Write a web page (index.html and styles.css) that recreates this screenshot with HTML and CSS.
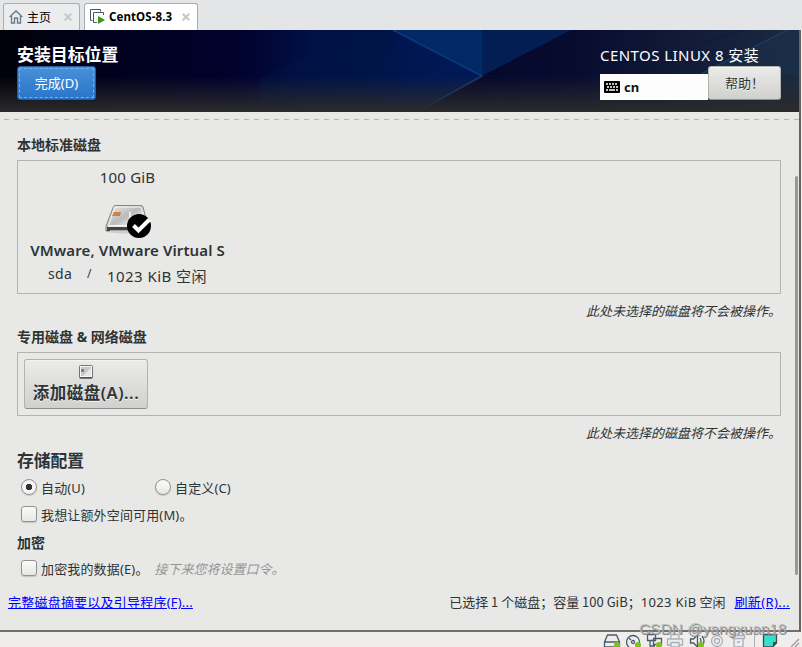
FILE: index.html
```
<!DOCTYPE html>
<html lang="zh-CN">
<head>
  <meta charset="UTF-8" />
  <title>安装目标位置</title>
  <link rel="stylesheet" href="styles.css">
</head>
<body>

<div class="tabs">
  <div class="tab">
    <svg width="14" height="14" viewBox="0 0 14 14" fill="none" stroke="#657987" stroke-width="1.3"><path d="M.7 7 7 1l6.300 6M2.500 6v7h3V8h3v5h3V6"/></svg>
    <span class="tab-name">主页</span>
    <svg class="close" width="8" height="8" viewBox="0 0 8 8"><path d="m.7.7 6.600 6.600m0-6.600L.7 7.300"/></svg>
  </div>
  <div class="tab active">
    <svg width="15" height="15" viewBox="0 0 15 15" fill="none" stroke="#455a66"><path d="M2.500 11.500h-2V.5h10v2M7 13.500H3.500v-10h10V6"/><path d="m8 7 7 4-7 4z" fill="#3c9b0c" stroke="none"/></svg>
    <span class="tab-name">CentOS-8.3</span>
    <svg class="close" width="8" height="8" viewBox="0 0 8 8"><path d="m.7.7 6.600 6.600m0-6.600L.7 7.300"/></svg>
  </div>
</div>

<div class="screen">
  <header class="banner">
    <svg class="banner-art" width="799" height="82" viewBox="0 0 799 82">
      <defs>
        <linearGradient id="base"><stop offset="0" stop-color="#010109"/><stop offset=".2" stop-color="#01011c"/><stop offset=".5" stop-color="#01022e"/><stop offset=".65" stop-color="#001145"/><stop offset="1" stop-color="#001a58"/></linearGradient>
        <linearGradient id="right"><stop offset="0" stop-color="#04052a"/><stop offset=".4" stop-color="#070b2e"/><stop offset="1" stop-color="#1b2a41"/></linearGradient>
        <linearGradient id="fade" x2="0" y2="1"><stop offset="0" stop-color="#2b2b2b" stop-opacity="0"/><stop offset="1" stop-color="#2b2b2b"/></linearGradient>
      </defs>
      <path fill="url(#base)" d="M0 0h482v82H0z"/>
      <path fill="#001446" opacity=".5" d="M353 0 260 49v33h113V48l31-48z"/>
      <path fill="url(#right)" d="M482 0h317v82H417l65-36z"/>
      <path fill="#002966" d="M393 0h89v46z"/>
      <path fill="#021e52" d="M482 0h89l-89 46z"/>
      <path fill="#1b304b" d="m787 0-86 44h98V0z" opacity=".6"/>
      <g fill="none" stroke-width="1.500"><path stroke="#083b83" d="m393 0 89 46"/><path stroke="#153b6d" d="m482 46-65 36"/><path stroke="#193b64" d="m787 0-86 44"/></g>
      <path fill="none" stroke="#0a1741" d="M482 46h109l45-46M482 46l31 36M540 0l51 46 30 36M591 46l155-46" opacity=".5"/>
      <path fill="url(#fade)" d="M0 46h799v36H0z"/>
    </svg>
    <div class="banner-left">
      <h1>安装目标位置</h1>
      <button class="btn-done"><span>完成(D)</span></button>
    </div>
    <div class="banner-right">
      <div class="product">CENTOS LINUX 8 安装</div>
      <div class="banner-tools">
        <div class="keyboard">
          <svg width="16" height="12" viewBox="0 0 16 12"><rect width="16" height="12" rx="1"/><path stroke="#fff" stroke-width="1.500" stroke-dasharray="2 1" d="M2 3h12M3 6h11"/><path stroke="#fff" stroke-width="1.500" d="M2 9h2m1 0h6m1 0h2"/></svg>
          cn
        </div>
        <button class="btn-help">帮助！</button>
      </div>
    </div>
  </header>

  <main>
    <svg class="cut-line" width="799" height="1"><path stroke="#b5b5b3" stroke-dasharray="5 5" d="M4 .5h795"/></svg>

    <h3 class="local-title">本地标准磁盘</h3>
    <div class="box local-box">
      <div class="disk">
        <div class="disk-size">100 GiB</div>
        <svg class="disk-icon" width="48" height="36" viewBox="0 0 48 36">
          <defs><linearGradient id="metal" x2="1" y2="1"><stop offset="0" stop-color="#eee"/><stop offset=".45" stop-color="#bbb"/><stop offset=".65" stop-color="#e4e4e4"/><stop offset="1" stop-color="#aaa"/></linearGradient></defs>
          <ellipse cx="22" cy="28" rx="21" ry="2.500" fill="#999" opacity=".35"/>
          <path fill="url(#metal)" stroke="#858585" d="M8.500 3.500Q9 2.500 10 2.500h26q1.500 0 2 1.500l5 19v4h-38v-1h-1v2h-3v-5z"/>
          <path fill="none" stroke="#f5f5f5" d="M10 4h26l5.500 18.500H3.500z"/>
          <path fill="#444" d="M4 24h38v3H5v1H2v-4z"/><path stroke="#e9e9e9" d="M3 23.500h38"/>
          <path fill="#cf8147" d="M9 9h7l-1 4H7z"/><path stroke="#eee" stroke-width="2" d="M25 9v8"/>
          <circle cx="34" cy="23" r="12"/><path fill="none" stroke="#fff" stroke-width="4" d="m28.500 22.500 5 5 11-11"/>
        </svg>
        <div class="disk-name">VMware, VMware Virtual S</div>
        <div class="disk-info"><span class="dev">sda</span><span class="slash">/</span><span class="free">1023 KiB 空闲</span></div>
      </div>
    </div>
    <p class="note">此处未选择的磁盘将不会被操作。</p>

    <h3 class="special-title">专用磁盘 &amp; 网络磁盘</h3>
    <div class="box special-box">
      <button class="btn-add">
        <svg width="14" height="14" viewBox="0 0 14 14"><rect x=".5" y=".5" width="13" height="13" rx="1" fill="#f7f7f7" stroke="#737373"/><path fill="#c9c9ca" d="M2 2h10v9H2z"/><path fill="#e6e6e8" d="m4 11 8-8v8z"/><path fill="#ba7040" d="M2 4h3v3H2z"/><path stroke="#555" d="M1 12.500h12"/></svg>
        <span>添加磁盘(A)...</span>
      </button>
    </div>
    <p class="note">此处未选择的磁盘将不会被操作。</p>

    <h2>存储配置</h2>
    <div class="options">
      <label class="auto"><i class="radio checked"></i><span>自动(U)</span></label>
      <label><i class="radio"></i><span>自定义(C)</span></label>
    </div>
    <label class="space"><i class="check"></i><span>我想让额外空间可用(M)。</span></label>
    <h3 class="crypt-title">加密</h3>
    <label class="crypt"><i class="check"></i><span>加密我的数据(E)。</span><em>接下来您将设置口令。</em></label>
  </main>

  <footer>
    <a class="summary">完整磁盘摘要以及引导程序(F)...</a>
    <span class="selected">已选择 1 个磁盘；容量 100 GiB<span class="semi">；</span><span class="amount">1023 KiB</span> 空闲</span>
    <a class="refresh">刷新(R)...</a>
  </footer>
  <div class="scrollbar"></div>
</div>

<div class="statusbar">
  <svg width="202" height="14" viewBox="0 0 202 14" fill="none" stroke="#465c6b" stroke-width="1.300">
    <path d="M4.500 9 7.500 2h9l3 7v5h-15zM4.500 9h15"/>
    <circle cx="33" cy="9" r="6.500"/><circle cx="33" cy="9" r="1.500"/><path d="m29 5 2 2m4 4 2 2"/>
    <path d="M47.500 1.500h8v6h-8zM53.500 5.500h8v6h-8zM50 8v5h5"/>
    <g stroke="#a8b1b8"><path d="M71 6V1.500h8V6M71 12h-3.500V6h15v6H79M71 9.500h8V14h-8z"/><circle cx="117" cy="8" r="5.500"/><circle cx="117" cy="8" r="2.500"/><path d="M132.500 2.500h12v3h-12zM134 6v8h9V6M137 9h3"/></g>
    <path d="M90.500 6h3l4-4v12l-4-4h-3zM100 5q2 3 0 6M102 3q4 5 0 10"/>
    <g fill="#79c51b" stroke="none"><circle cx="17" cy="12" r="3"/><circle cx="38" cy="12" r="3"/><circle cx="59" cy="12" r="3"/><circle cx="101" cy="12" r="3"/></g>
    <path stroke="#b0adad" stroke-width="1" d="M154.500 0v14"/>
    <path fill="#38dfca" stroke="#344e59" d="M163.500 1.500h13V10l-4 4h-9z"/><path fill="#344e59" stroke="none" d="M177 9h-4v5z"/>
    <path stroke="#999" d="m191 14 8-8m-4 8 4-4"/>
  </svg>
</div>
<div class="watermark">CSDN @yangxuan18</div>

</body>
</html>
```
FILE: styles.css
```
* {
  box-sizing: border-box;
}
body {
  margin: 0;
  width: 802px;
  height: 647px;
  overflow: hidden;
  position: relative;
  background: #f0eded;
  color: #2e3436;
  font-family: "Noto Sans", "Noto Sans CJK SC", sans-serif;
  font-size: 13px;
  white-space: nowrap;
}
h1, h2, h3, p {
  margin: 0;
}
button {
  font-family: inherit;
  color: inherit;
  padding: 0;
}
svg {
  display: block;
  flex: none;
}

/* tabs */
.tabs {
  display: flex;
  gap: 4px;
  height: 30px;
  padding: 3px 0 0 3px;
  background: #e3e5e7;
}
.tab {
  display: flex;
  align-items: center;
  width: 77px;
  padding: 0 7px 1px 5px;
  border: 1px solid #aaadaf;
  border-bottom: none;
  border-radius: 3px 3px 0 0;
  background: #ebecee;
  color: #000;
  font-size: 12px;
}
.tab.active {
  width: 114px;
  padding-left: 5px;
  background: #fff;
  font-family: "Noto Sans", sans-serif;
  font-size: 11.5px;
  font-weight: 700;
}
.tab-name {
  margin-left: 4px;
}
.active .tab-name {
  letter-spacing: 0.1px;
}
.close {
  margin-left: auto;
  stroke: #c4c6c8;
  stroke-width: 2;
}

/* installer screen */
.screen {
  position: relative;
  display: flex;
  flex-direction: column;
  width: 801px;
  height: 602px;
  border-right: 2px solid #66665f;
  border-bottom: 2px solid #70706b;
  background: #e8e8e6;
}
.banner {
  position: relative;
  display: flex;
  justify-content: space-between;
  flex: none;
  height: 82px;
  padding: 14px 18px 0 17px;
  color: #fff;
}
.banner-art {
  position: absolute;
  top: 0;
  left: 0;
}
.banner-left, .banner-right {
  position: relative;
}
h1 {
  height: 22px;
  line-height: 22px;
  font-size: 16.900px;
}
.btn-done {
  display: block;
  width: 79px;
  height: 34px;
  padding: 1px;
  border: 1px solid #1b5ea8;
  border-radius: 3px;
  background: linear-gradient(#4a90d9, #2a75c9);
  font-size: 13px;
}
.btn-done span {
  display: block;
  height: 30px;
  border: 1px dashed #76afe5;
  line-height: 29px;
}
.product {
  height: 22px;
  line-height: 22px;
  font-size: 15px;
  letter-spacing: 0.45px;
}
.banner-tools {
  display: flex;
  align-items: flex-end;
}
.keyboard {
  display: flex;
  align-items: center;
  gap: 4px;
  width: 108px;
  height: 26px;
  padding-left: 4px;
  background: #fdfdfd;
  color: #111;
  font-size: 13px;
  font-weight: 700;
}
.btn-help, .btn-add {
  border: 1px solid #b2b2ae;
  border-bottom-color: #8e8e8a;
  border-radius: 3px;
  background: linear-gradient(#ebebea, #d0d0ce);
  box-shadow: inset 0 1px #f4f4f3;
  text-shadow: 0 1px #f4f4f3;
}
.btn-help {
  width: 73px;
  height: 34px;
  padding: 0 0 1px;
  color: #2e3436;
  font-size: 13px;
}

main {
  height: 474px;
  padding: 7px 0 0 17px;
}
.cut-line {
  margin-left: -17px;
}
h3 {
  font-size: 14px;
  line-height: 20px;
}
.local-title {
  margin-top: 15px;
}
.box {
  width: 764px;
  border: 1px solid #b3b3b0;
}
.local-box {
  height: 134px;
  margin-top: 5px;
  padding: 5px 0 0 12px;
}
.disk {
  display: flex;
  flex-direction: column;
  align-items: center;
  width: 195px;
}
.disk-size {
  height: 22px;
  line-height: 22px;
  font-size: 15px;
  letter-spacing: 0.2px;
}
.disk-icon {
  margin: 15px 0 0 3px;
}
.disk-name {
  height: 22px;
  line-height: 22px;
  font-size: 15px;
  font-weight: 600;
  letter-spacing: 0.1px;
}
.disk-info {
  display: flex;
  align-items: center;
  align-self: flex-start;
  margin-left: 18px;
  height: 28px;
  font-size: 15px;
}
.dev {
  width: 39px;
  height: 22px;
  font-size: 14px;
  letter-spacing: 0.4px;
}
.slash {
  width: 20px;
  height: 20px;
  font-size: 12px;
}
.free {
  letter-spacing: 0.45px;
}
.note {
  width: 764px;
  height: 20px;
  margin-top: 7px;
  line-height: 20px;
  font-style: italic;
  text-align: right;
}
.special-title {
  margin-top: 6px;
}
.special-box {
  height: 64px;
  margin-top: 5px;
  padding: 6px;
}
.btn-add {
  display: flex;
  flex-direction: column;
  align-items: center;
  width: 124px;
  height: 50px;
  padding-top: 5px;
  font-size: 16.500px;
  font-weight: 600;
  letter-spacing: 0.5px;
}
.btn-add span {
  line-height: 28px;
}

h2 {
  margin-top: 6px;
  font-size: 16.800px;
  line-height: 24px;
}
label, .options {
  display: flex;
  align-items: center;
}
label span {
  margin-left: 4px;
  letter-spacing: 0.15px;
}
.options {
  height: 24px;
  margin: 2px 0 0 4px;
}
.auto {
  width: 134px;
}
.radio, .check {
  width: 16px;
  height: 16px;
  border: 1px solid #929290;
  border-radius: 3px;
  background: linear-gradient(#fafafa, #e7e7e5);
  box-shadow: 0 1px 1px #c4c4c0;
}
.radio {
  border-radius: 50%;
}
.radio.checked {
  background: radial-gradient(circle, #2e3436 3px, #f4f4f3 3.500px);
}
.space, .crypt {
  height: 24px;
  margin-left: 4px;
}
.space {
  margin-top: 3px;
}
.crypt-title {
  margin-top: 7px;
}
.crypt {
  margin-top: 3px;
}
.crypt em {
  margin-left: 6px;
  color: #959592;
}

footer {
  display: flex;
  height: 32px;
  padding: 6px 9px 0 8px;
  line-height: 20px;
}
a {
  color: #00f;
  text-decoration: underline;
}
.summary {
  letter-spacing: 0.22px;
}
.selected {
  margin-left: auto;
  font-family: "Noto Sans CJK SC", sans-serif;
}
.amount {
  font-family: "Noto Sans", sans-serif;
  letter-spacing: 0.35px;
}
.refresh {
  margin-left: 9px;
  letter-spacing: 0.4px;
}
.scrollbar {
  position: absolute;
  top: 146px;
  right: 1px;
  width: 3px;
  height: 399px;
  border-radius: 2px;
  background: #959997;
}

.statusbar {
  height: 15px;
  padding: 1px 0 0 600px;
  background: #f0eded;
}
.watermark {
  position: absolute;
  top: 619px;
  left: 639px;
  color: rgba(180, 180, 178, 0.75);
  font: 15.400px/19px "Liberation Sans", sans-serif;
  text-shadow: 1px 1px #888;
}
```
